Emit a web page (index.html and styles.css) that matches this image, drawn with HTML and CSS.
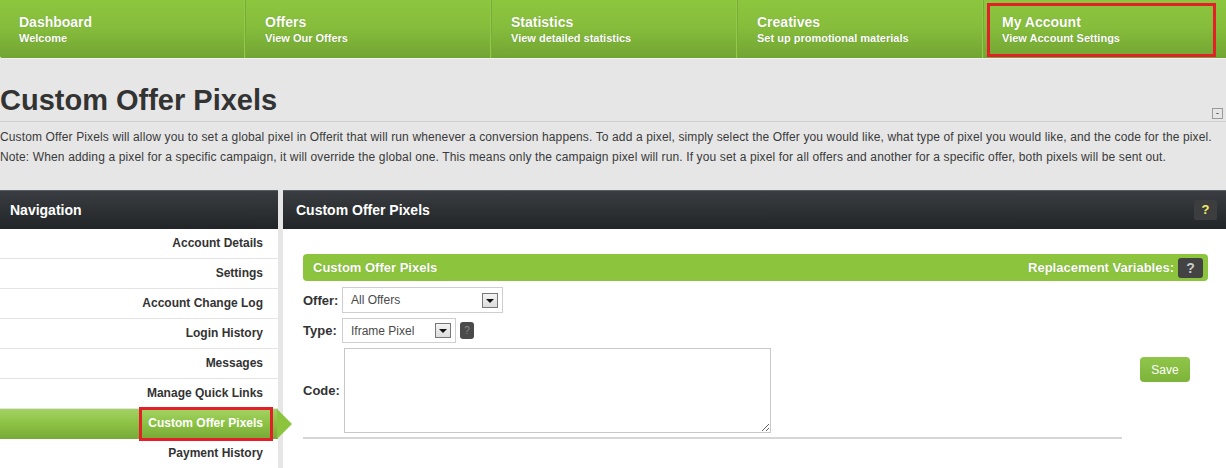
FILE: index.html
```html
<!DOCTYPE html>
<html>
<head>
<meta charset="utf-8">
<link rel="stylesheet" href="styles.css">
</head>
<body>
<div class="topnav">
  <div class="tab"><div class="tab-title">Dashboard</div><div class="tab-sub">Welcome</div></div>
  <div class="tab"><div class="tab-title">Offers</div><div class="tab-sub">View Our Offers</div></div>
  <div class="tab"><div class="tab-title">Statistics</div><div class="tab-sub">View detailed statistics</div></div>
  <div class="tab"><div class="tab-title">Creatives</div><div class="tab-sub">Set up promotional materials</div></div>
  <div class="tab tab-last"><div class="tab-title">My Account</div><div class="tab-sub">View Account Settings</div><span class="mark mark-tab"></span></div>
</div>

<div class="page-head">
  <h1 class="page-title">Custom Offer Pixels</h1>
  <span class="collapse">-</span>
</div>
<div class="intro">
  <div class="intro-line">Custom Offer Pixels will allow you to set a global pixel in Offerit that will run whenever a conversion happens. To add a pixel, simply select the Offer you would like, what type of pixel you would like, and the code for the pixel.</div>
  <div class="intro-line">Note: When adding a pixel for a specific campaign, it will override the global one. This means only the campaign pixel will run. If you set a pixel for all offers and another for a specific offer, both pixels will be sent out.</div>
</div>

<div class="main">
  <div class="sidebar">
    <div class="panel-head">Navigation</div>
    <ul class="nav-list">
      <li class="nav-item">Account Details</li>
      <li class="nav-item">Settings</li>
      <li class="nav-item">Account Change Log</li>
      <li class="nav-item">Login History</li>
      <li class="nav-item">Messages</li>
      <li class="nav-item">Manage Quick Links</li>
      <li class="nav-item nav-active">Custom Offer Pixels<span class="mark mark-nav"></span></li>
      <li class="nav-item">Payment History</li>
    </ul>
  </div>
  <div class="content">
    <div class="panel-head content-head"><span>Custom Offer Pixels</span><span class="help-btn">?</span></div>
    <div class="content-body">
      <div class="green-bar">
        <span>Custom Offer Pixels</span>
        <span class="repl">Replacement Variables: <span class="repl-btn">?</span></span>
      </div>
      <div class="form-wrap">
        <div class="form">
          <div class="row">
            <label class="lbl">Offer:</label>
            <div class="select select-offer"><span>All Offers</span><span class="arrow"></span></div>
          </div>
          <div class="row">
            <label class="lbl">Type:</label>
            <div class="select select-type"><span>Iframe Pixel</span><span class="arrow"></span></div>
            <span class="mini-help">?</span>
          </div>
          <div class="row row-code">
            <label class="lbl">Code:</label>
            <textarea class="code"></textarea>
          </div>
        </div>
        <button class="save">Save</button>
      </div>
    </div>
  </div>
</div>
</body>
</html>
```

FILE: styles.css
```css
* { box-sizing: border-box; }
html, body { margin: 0; padding: 0; }
body {
  background: #e6e6e6;
  font-family: "Liberation Sans", Arial, sans-serif;
  color: #333;
  width: 1226px;
  height: 468px;
  overflow: hidden;
}

/* top navigation */
.topnav {
  display: flex;
  height: 59px;
  background: linear-gradient(#8cc53e, #86be3c 45%, #72a433);
  border-bottom: 1px solid #f2f2f2;
  border-bottom-left-radius: 3px;
}
.tab {
  position: relative;
  width: 246px;
  padding: 14px 0 0 19px;
  border-right: 1px solid #78ad35;
  box-shadow: inset -1px 0 0 #93c94a;
  color: #fff;
  text-shadow: 0 0 1px rgba(40, 70, 10, .35);
}
.tab-last { flex: 1; border-right: 0; box-shadow: none; padding-left: 18px; }
.tab-title { font-size: 14px; font-weight: bold; line-height: 17px; }
.tab-sub { font-size: 11px; font-weight: bold; line-height: 14px; }

.mark {
  position: absolute;
  border: 3px solid #e3202a;
}
.mark-tab { left: 3px; top: 3px; right: 10px; bottom: 1px; }

/* page heading */
.page-head {
  position: relative;
  margin-top: 24px;
  border-bottom: 1px solid #cdcdcd;
  padding-bottom: 4px;
}
.page-title {
  margin: 0;
  font-size: 29px;
  line-height: 34px;
  font-weight: bold;
  color: #333;
}
.collapse {
  position: absolute;
  right: 3px;
  top: 25px;
  width: 11px;
  height: 11px;
  border: 1px solid #9a9a9a;
  font-size: 10px;
  line-height: 8px;
  text-align: center;
  color: #555;
}
.intro {
  margin-top: 5px;
  font-size: 12px;
  line-height: 20px;
  color: #3a3a3a;
  letter-spacing: .13px;
}
.intro-line { white-space: nowrap; }

/* main area */
.main {
  display: flex;
  gap: 5px;
  margin-top: 23px;
}
.sidebar {
  width: 278px;
  background: #fff;
  height: 300px;
}
.panel-head {
  height: 39px;
  line-height: 39px;
  background: linear-gradient(#3a3e42, #2d3134 50%, #222528);
  color: #fff;
  font-size: 14px;
  font-weight: bold;
  padding-left: 10px;
  border-top: 1px solid #5a5d60;
}
.nav-list { list-style: none; margin: 0; padding: 0; }
.nav-item {
  position: relative;
  height: 30px;
  line-height: 29px;
  border-bottom: 1px solid #e4e4e4;
  text-align: right;
  padding-right: 15px;
  font-size: 12px;
  font-weight: bold;
  color: #333;
}
.nav-active {
  background: linear-gradient(#a3d363, #8cc244 50%, #79ab38);
  color: #fff;
  border-bottom-color: #79ab38;
}
.nav-active::after {
  content: "";
  position: absolute;
  left: 277px;
  top: 0;
  border-left: 15px solid #8cc43e;
  border-top: 15px solid transparent;
  border-bottom: 15px solid transparent;
}
.mark-nav { left: 139px; top: -2px; width: 134px; height: 34px; }

.content {
  flex: 1;
  background: #fff;
  height: 300px;
}
.content-head {
  display: flex;
  align-items: center;
  justify-content: space-between;
  padding-left: 13px;
  padding-right: 9px;
}
.help-btn {
  width: 23px;
  height: 20px;
  line-height: 20px;
  border-radius: 2px;
  background: #3b3d3f;
  color: #f2ef6a;
  text-align: center;
  font-size: 13px;
}
.content-body { padding: 25px 18px 0 20px; }
.green-bar {
  display: flex;
  justify-content: space-between;
  align-items: center;
  height: 27px;
  background: #8cc43e;
  border-radius: 4px;
  padding: 0 5px 0 10px;
  color: #fff;
  font-size: 13px;
  font-weight: bold;
  text-shadow: 0 0 1px rgba(40, 70, 10, .3);
}
.repl { display: flex; align-items: center; gap: 4px; }
.repl-btn {
  width: 25px;
  height: 20px;
  line-height: 20px;
  border-radius: 3px;
  background: #434343;
  color: #ccc;
  text-align: center;
  font-size: 14px;
  text-shadow: none;
}

.form-wrap { display: flex; align-items: flex-start; }
.form {
  width: 819px;
  padding-top: 6px;
  padding-bottom: 4px;
  border-bottom: 2px solid #d6d6d6;
}
.row { display: flex; align-items: center; margin-bottom: 5px; }
.row-code { margin-bottom: 0; }
.lbl {
  width: 39px;
  font-size: 13px;
  font-weight: bold;
  color: #333;
}
.select {
  display: flex;
  align-items: center;
  justify-content: space-between;
  height: 26px;
  border: 1px solid #cfcfcf;
  padding: 0 4px 0 8px;
  font-size: 12px;
  color: #4a4a4a;
  background: #fff;
}
.select-offer { width: 161px; }
.select-type { width: 114px; height: 25px; }
.arrow {
  position: relative;
  width: 16px;
  height: 15px;
  border: 1px solid #777;
  background: linear-gradient(#f4f4f4, #dcdcdc);
}
.arrow::after {
  content: "";
  position: absolute;
  left: 3px;
  top: 5px;
  border-top: 4px solid #111;
  border-left: 4px solid transparent;
  border-right: 4px solid transparent;
}
.mini-help {
  margin-left: 4px;
  width: 14px;
  height: 17px;
  line-height: 17px;
  border-radius: 3px;
  background: #4a4a4a;
  color: #8a8a8a;
  font-size: 10px;
  text-align: center;
}
.code {
  margin: 0 0 0 2px;
  width: 427px;
  height: 85px;
  border: 1px solid #c8c8c8;
  font-family: "Liberation Sans", Arial, sans-serif;
}
.save {
  margin: 76px 0 0 18px;
  width: 50px;
  height: 25px;
  border: 0;
  border-radius: 4px;
  background: linear-gradient(#8fc64a, #7db33a);
  color: #fff;
  font-family: "Liberation Sans", Arial, sans-serif;
  font-size: 12px;
  padding: 0;
}
```
